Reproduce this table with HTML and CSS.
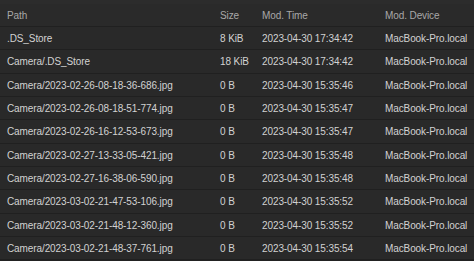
FILE: index.html
```html
<!DOCTYPE html>
<html>
<head>
<meta charset="utf-8">
<link rel="stylesheet" href="styles.css">
</head>
<body>
<div class="table">
  <div class="row head">
    <span class="c-path">Path</span><span class="c-size">Size</span><span class="c-time">Mod. Time</span><span class="c-dev">Mod. Device</span>
  </div>
  <div class="row"><span class="c-path">.DS_Store</span><span class="c-size">8 KiB</span><span class="c-time">2023-04-30 17:34:42</span><span class="c-dev">MacBook-Pro.local</span></div>
  <div class="row"><span class="c-path">Camera/.DS_Store</span><span class="c-size">18 KiB</span><span class="c-time">2023-04-30 17:34:42</span><span class="c-dev">MacBook-Pro.local</span></div>
  <div class="row"><span class="c-path">Camera/2023-02-26-08-18-36-686.jpg</span><span class="c-size">0 B</span><span class="c-time">2023-04-30 15:35:46</span><span class="c-dev">MacBook-Pro.local</span></div>
  <div class="row"><span class="c-path">Camera/2023-02-26-08-18-51-774.jpg</span><span class="c-size">0 B</span><span class="c-time">2023-04-30 15:35:47</span><span class="c-dev">MacBook-Pro.local</span></div>
  <div class="row"><span class="c-path">Camera/2023-02-26-16-12-53-673.jpg</span><span class="c-size">0 B</span><span class="c-time">2023-04-30 15:35:47</span><span class="c-dev">MacBook-Pro.local</span></div>
  <div class="row"><span class="c-path">Camera/2023-02-27-13-33-05-421.jpg</span><span class="c-size">0 B</span><span class="c-time">2023-04-30 15:35:48</span><span class="c-dev">MacBook-Pro.local</span></div>
  <div class="row"><span class="c-path">Camera/2023-02-27-16-38-06-590.jpg</span><span class="c-size">0 B</span><span class="c-time">2023-04-30 15:35:48</span><span class="c-dev">MacBook-Pro.local</span></div>
  <div class="row"><span class="c-path">Camera/2023-03-02-21-47-53-106.jpg</span><span class="c-size">0 B</span><span class="c-time">2023-04-30 15:35:52</span><span class="c-dev">MacBook-Pro.local</span></div>
  <div class="row"><span class="c-path">Camera/2023-03-02-21-48-12-360.jpg</span><span class="c-size">0 B</span><span class="c-time">2023-04-30 15:35:52</span><span class="c-dev">MacBook-Pro.local</span></div>
  <div class="row"><span class="c-path">Camera/2023-03-02-21-48-37-761.jpg</span><span class="c-size">0 B</span><span class="c-time">2023-04-30 15:35:54</span><span class="c-dev">MacBook-Pro.local</span></div>
</div>
</body>
</html>
```
FILE: styles.css
```css
html, body {
  margin: 0;
  padding: 0;
  background: #222222;
  width: 474px;
  height: 261px;
  overflow: hidden;
}
.table {
  display: flex;
  flex-direction: column;
  padding-top: 4px;
  background: #2c2c2c;
  font-family: "Liberation Sans", Arial, sans-serif;
  font-size: 10px;
  letter-spacing: -0.1px;
  color: #d2d2d2;
}
.row {
  display: grid;
  grid-template-columns: 213px 42px 123px 1fr;
  align-items: center;
  height: 22.33px;
  padding-left: 7px;
  padding-top: 1px;
  box-sizing: content-box;
  background: #292929;
  border-bottom: 1px solid #202020;
  white-space: nowrap;
}
.row:not(.head) {
  height: 21.33px;
}
.row.head {
  height: 21px;
  background: #2a2a2a;
  color: #a8a8a8;
}
```
